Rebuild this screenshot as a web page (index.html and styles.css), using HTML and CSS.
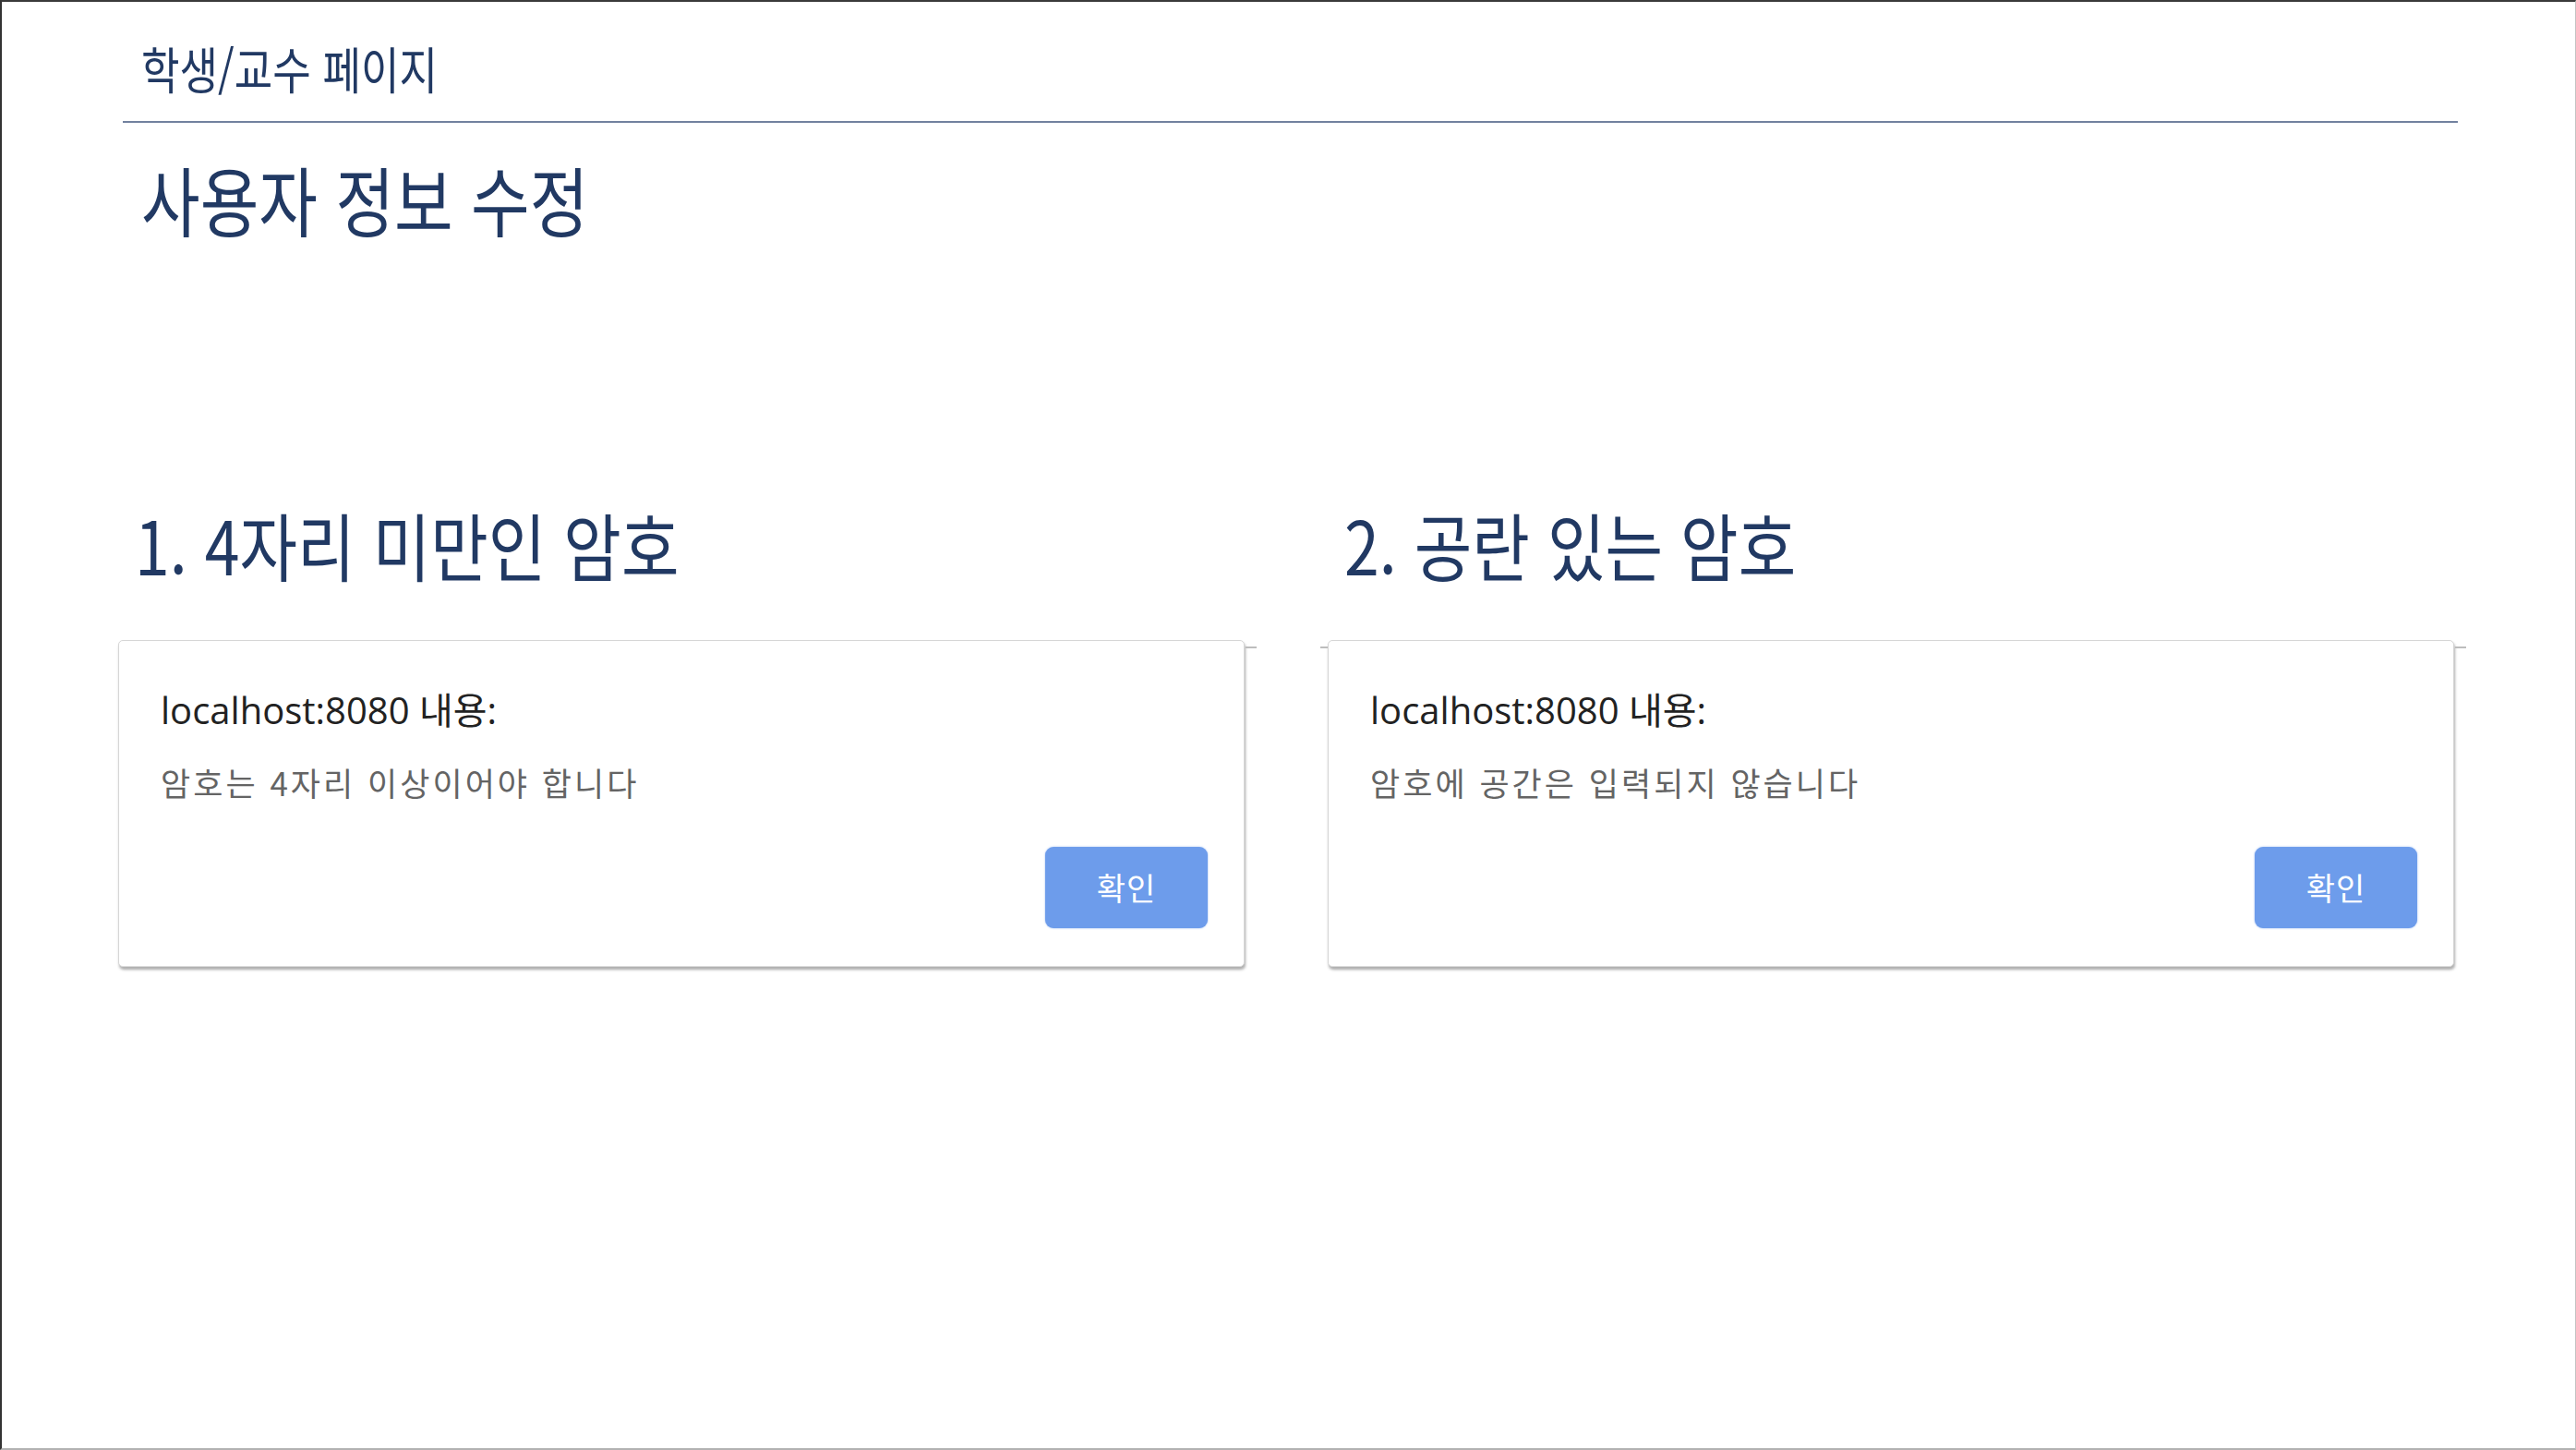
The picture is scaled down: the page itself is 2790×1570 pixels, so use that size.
FILE: index.html
```html
<!DOCTYPE html>
<html lang="ko">
<head>
<meta charset="utf-8">
<title>사용자 정보 수정</title>
<link rel="stylesheet" href="styles.css">
</head>
<body>
<div class="page">
  <header class="top">
    <div class="crumb"><span class="sx sx-crumb">학생/교수 페이지</span></div>
  </header>
  <h1 class="title"><span class="sx sx-title">사용자 정보 수정</span></h1>
  <div class="cases">
    <section class="case">
      <h2 class="case-title"><span class="sx sx-case">1. 4자리 미만인 암호</span></h2>
      <div class="dialog dialog-first">
        <p class="dlg-origin">localhost:8080 내용:</p>
        <p class="dlg-msg">암호는 4자리 이상이어야 합니다</p>
        <div class="dlg-actions"><button class="dlg-btn">확인</button></div>
      </div>
    </section>
    <section class="case">
      <h2 class="case-title"><span class="sx sx-case">2. 공란 있는 암호</span></h2>
      <div class="dialog dialog-second">
        <p class="dlg-origin">localhost:8080 내용:</p>
        <p class="dlg-msg">암호에 공간은 입력되지 않습니다</p>
        <div class="dlg-actions"><button class="dlg-btn">확인</button></div>
      </div>
    </section>
  </div>
</div>
</body>
</html>
```
FILE: styles.css
```css
html, body {
  margin: 0;
  padding: 0;
  background: #ffffff;
}

.page {
  box-sizing: border-box;
  width: 2790px;
  height: 1570px;
  border-top: 2px solid #3a3a3a;
  border-left: 2px solid #333333;
  border-right: 1px solid #c4c4c4;
  border-bottom: 2px solid #b2b2b2;
  font-family: "Noto Sans CJK KR", "Noto Sans", sans-serif;
  color: #213963;
  overflow: hidden;
}

.sx {
  display: inline-block;
  transform-origin: 0 50%;
  white-space: nowrap;
}

.top {
  margin-left: 131px;
  width: 2529px;
  padding-top: 45px;
  padding-bottom: 30px;
  border-bottom: 2px solid #72819f;
}

.crumb {
  padding-left: 20px;
  font-size: 54px;
  line-height: 1;
  font-weight: 400;
}

.sx-crumb {
  transform: scaleX(0.836);
}

.title {
  margin: 41px 0 0 151px;
  font-size: 82px;
  line-height: 1;
  font-weight: 400;
}

.sx-title {
  transform: scaleX(0.844);
}

.cases {
  display: flex;
  gap: 90px;
  margin: 292px 0 0 126px;
}

.case {
  width: 1220px;
}

.case-title {
  margin: 0 0 65px 18px;
  font-size: 80px;
  line-height: 1;
  font-weight: 400;
}

.sx-case {
  transform: scaleX(0.85);
}

.dialog {
  position: relative;
  box-sizing: border-box;
  width: 1220px;
  padding: 55px 39px 41px 45px;
  border: 1px solid #d6d6d6;
  border-radius: 5px;
  background: #ffffff;
  box-shadow: 1px 3px 3px rgba(0, 0, 0, 0.32);
}

.dialog-second {
  margin-top: 4px;
}

.dialog::after {
  content: "";
  position: absolute;
  top: 6px;
  right: -14px;
  width: 12px;
  height: 2px;
  background: #bdbdbd;
}

.dialog-second::before {
  content: "";
  position: absolute;
  top: 6px;
  left: -9px;
  width: 8px;
  height: 2px;
  background: #bdbdbd;
}

.dlg-origin {
  margin: 0;
  font-family: "Open Sans", "Noto Sans CJK KR", sans-serif;
  font-size: 40px;
  line-height: 1;
  color: #222222;
}

.dlg-msg {
  margin: 40px 0 0;
  font-family: "Noto Sans CJK KR", sans-serif;
  font-size: 35px;
  line-height: 1;
  letter-spacing: 3px;
  color: #646464;
}

.dlg-actions {
  display: flex;
  justify-content: flex-end;
  margin-top: 53px;
}

.dlg-btn {
  width: 176px;
  height: 88px;
  border: none;
  border-radius: 9px;
  background: #6d9ceb;
  box-shadow: 0 0 2px rgba(109, 156, 235, 0.8);
  color: #ffffff;
  font-family: "Noto Sans CJK KR", sans-serif;
  font-size: 34px;
  line-height: 1;
  letter-spacing: 1px;
  padding: 0;
}
```
